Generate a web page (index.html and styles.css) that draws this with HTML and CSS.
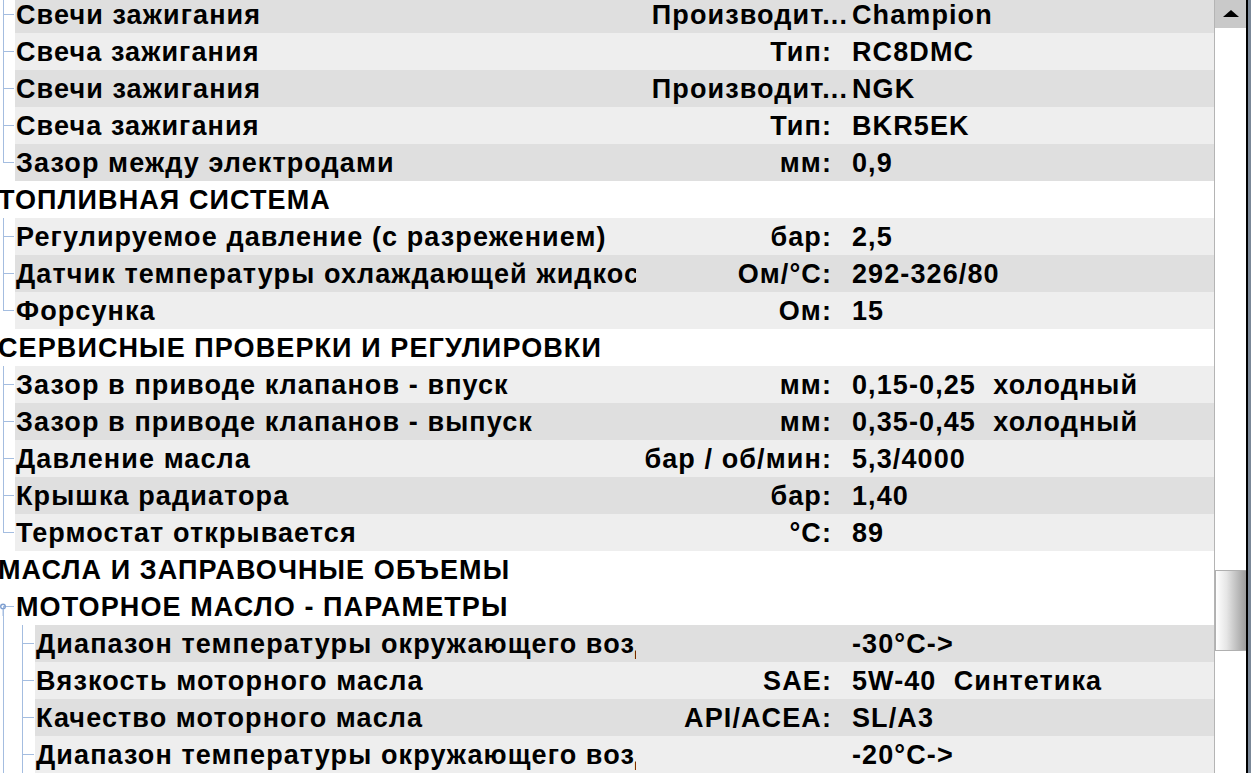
FILE: index.html
```html
<!DOCTYPE html>
<html lang="ru">
<head>
<meta charset="utf-8">
<title>Данные</title>
<link rel="stylesheet" href="styles.css">
</head>
<body>
<div class="app">
  <div class="view">
    <div class="rows">
      <div class="row"><div class="indent"><span class="v1"></span><span class="h1"></span></div><div class="cells dark"><div class="name">Свечи зажигания</div><div class="unit trunc">Производит...</div><div class="value">Champion</div></div></div>
      <div class="row"><div class="indent"><span class="v1"></span><span class="h1"></span></div><div class="cells light"><div class="name">Свеча зажигания</div><div class="unit">Тип:</div><div class="value">RC8DMC</div></div></div>
      <div class="row"><div class="indent"><span class="v1"></span><span class="h1"></span></div><div class="cells dark"><div class="name">Свечи зажигания</div><div class="unit trunc">Производит...</div><div class="value">NGK</div></div></div>
      <div class="row"><div class="indent"><span class="v1"></span><span class="h1"></span></div><div class="cells light"><div class="name">Свеча зажигания</div><div class="unit">Тип:</div><div class="value">BKR5EK</div></div></div>
      <div class="row"><div class="indent"><span class="v1 last"></span><span class="h1"></span></div><div class="cells dark"><div class="name">Зазор между электродами</div><div class="unit">мм:</div><div class="value">0,9</div></div></div>

      <div class="row section"><div class="title">ТОПЛИВНАЯ СИСТЕМА</div></div>
      <div class="row"><div class="indent"><span class="v1"></span><span class="h1"></span></div><div class="cells light"><div class="name">Регулируемое давление (с разрежением)</div><div class="unit">бар:</div><div class="value">2,5</div></div></div>
      <div class="row"><div class="indent"><span class="v1"></span><span class="h1"></span></div><div class="cells dark"><div class="name">Датчик температуры охлаждающей жидкости</div><div class="unit">Ом/°C:</div><div class="value">292-326/80</div></div></div>
      <div class="row"><div class="indent"><span class="v1 last"></span><span class="h1"></span></div><div class="cells light"><div class="name">Форсунка</div><div class="unit">Ом:</div><div class="value">15</div></div></div>

      <div class="row section"><div class="title">СЕРВИСНЫЕ ПРОВЕРКИ И РЕГУЛИРОВКИ</div></div>
      <div class="row"><div class="indent"><span class="v1"></span><span class="h1"></span></div><div class="cells light"><div class="name">Зазор в приводе клапанов - впуск</div><div class="unit">мм:</div><div class="value">0,15-0,25  холодный</div></div></div>
      <div class="row"><div class="indent"><span class="v1"></span><span class="h1"></span></div><div class="cells dark"><div class="name">Зазор в приводе клапанов - выпуск</div><div class="unit">мм:</div><div class="value">0,35-0,45  холодный</div></div></div>
      <div class="row"><div class="indent"><span class="v1"></span><span class="h1"></span></div><div class="cells light"><div class="name">Давление масла</div><div class="unit">бар / об/мин:</div><div class="value">5,3/4000</div></div></div>
      <div class="row"><div class="indent"><span class="v1"></span><span class="h1"></span></div><div class="cells dark"><div class="name">Крышка радиатора</div><div class="unit">бар:</div><div class="value">1,40</div></div></div>
      <div class="row"><div class="indent"><span class="v1 last"></span><span class="h1"></span></div><div class="cells light"><div class="name">Термостат открывается</div><div class="unit">°C:</div><div class="value">89</div></div></div>

      <div class="row section"><div class="title">МАСЛА И ЗАПРАВОЧНЫЕ ОБЪЕМЫ</div></div>
      <div class="row"><div class="indent"><span class="v1 below"></span><span class="h1"></span>
        <svg class="knob" width="9" height="14" viewBox="0 0 9 14"><circle cx="4" cy="4.5" r="2.3" fill="none" stroke="#7f9fd0" stroke-width="1.4"/><line x1="4" y1="7" x2="4" y2="14" stroke="#a4bde0" stroke-width="1"/></svg>
      </div><div class="cells plain"><div class="name">МОТОРНОЕ МАСЛО - ПАРАМЕТРЫ</div></div></div>
      <div class="row"><div class="indent l2"><span class="v1"></span><span class="v2"></span><span class="h2"></span></div><div class="cells dark"><div class="name">Диапазон температуры окружающего воздуха</div><div class="unit"></div><div class="value">-30°C-&gt;</div></div></div>
      <div class="row"><div class="indent l2"><span class="v1"></span><span class="v2"></span><span class="h2"></span></div><div class="cells light"><div class="name">Вязкость моторного масла</div><div class="unit">SAE:</div><div class="value">5W-40  Синтетика</div></div></div>
      <div class="row"><div class="indent l2"><span class="v1"></span><span class="v2"></span><span class="h2"></span></div><div class="cells dark"><div class="name">Качество моторного масла</div><div class="unit">API/ACEA:</div><div class="value">SL/A3</div></div></div>
      <div class="row"><div class="indent l2"><span class="v1"></span><span class="v2"></span><span class="h2"></span></div><div class="cells light"><div class="name">Диапазон температуры окружающего воздуха</div><div class="unit"></div><div class="value">-20°C-&gt;</div></div></div>
    </div>
  </div>
  <div class="scrollbar">
    <div class="sb-track">
      <div class="sb-btn"><span class="arrow"></span></div>
      <div class="sb-thumb"></div>
    </div>
    <div class="sb-edge"></div>
    <div class="sb-frame"></div>
  </div>
</div>
</body>
</html>
```

FILE: styles.css
```css
html, body {
  margin: 0;
  padding: 0;
  background: #ffffff;
}
body {
  font-family: "Liberation Sans", Arial, sans-serif;
  font-weight: bold;
  font-size: 27px;
  letter-spacing: 1.1px;
  color: #000;
  overflow: hidden;
}
.app {
  display: flex;
  width: 1251px;
  height: 773px;
  overflow: hidden;
}
.view {
  width: 1214px;
  flex: none;
  overflow: hidden;
}
.rows {
  margin-top: -4px;
}
.row {
  display: flex;
  height: 37px;
  line-height: 38px;
}
.indent {
  position: relative;
  width: 15px;
  flex: none;
}
.indent.l2 {
  width: 35px;
}
.v1, .v2, .h1, .h2 {
  position: absolute;
  background: #a4bde0;
}
.v1 {
  left: 3px;
  top: 0;
  bottom: 0;
  width: 1px;
}
.v1.last {
  bottom: 50%;
}
.v1.below {
  top: 50%;
}
.h1 {
  left: 3px;
  width: 11px;
  top: 18px;
  height: 1px;
}
.v2 {
  left: 22px;
  top: 0;
  bottom: 0;
  width: 1px;
}
.h2 {
  left: 22px;
  width: 12px;
  top: 18px;
  height: 1px;
}
.knob {
  position: absolute;
  left: -1px;
  top: 14px;
}
.cells {
  flex: 1;
  min-width: 0;
  display: flex;
  overflow: hidden;
}
.cells.dark { background: #dfdfdf; }
.cells.light { background: #eeeeee; }
.cells.plain { background: #ffffff; }
.name {
  flex: 1;
  min-width: 0;
  overflow: hidden;
  white-space: nowrap;
  padding-left: 1px;
}
.unit {
  width: 212px;
  flex: none;
  box-sizing: border-box;
  text-align: right;
  padding-right: 16px;
  white-space: nowrap;
  overflow: hidden;
}
.unit.trunc {
  padding-right: 0;
}
.value {
  width: 366px;
  flex: none;
  box-sizing: border-box;
  padding-left: 4px;
  white-space: pre;
}
.section .title {
  margin-left: -2px;
  white-space: nowrap;
}
.scrollbar {
  display: flex;
  flex: none;
  width: 37px;
  height: 773px;
}
.sb-track {
  width: 31px;
  border-left: 1px solid #b4b4b4;
  background: #ffffff;
  display: flex;
  flex-direction: column;
}
.sb-btn {
  height: 28px;
  background: #c9c9c9;
  display: flex;
  justify-content: center;
  align-items: center;
}
.arrow {
  width: 0;
  height: 0;
  border-left: 8px solid transparent;
  border-right: 8px solid transparent;
  border-bottom: 7px solid #000;
  margin-top: -2px;
}
.sb-thumb {
  margin-top: 542px;
  height: 79px;
  border: 1px solid #b0b0b0;
  border-right: none;
  background: linear-gradient(to right, #ffffff 0%, #e6e6e6 35%, #9c9c9c 100%);
}
.sb-edge {
  width: 2px;
  background: #000;
}
.sb-frame {
  width: 3px;
  background: #7b8898;
}
```
